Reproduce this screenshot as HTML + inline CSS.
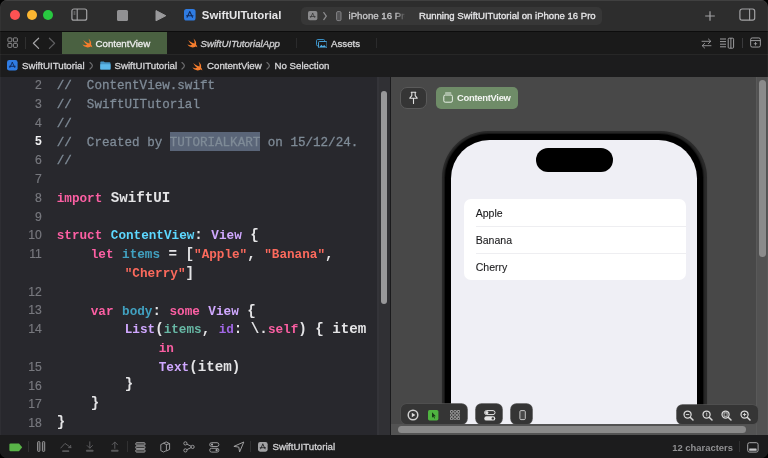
<!DOCTYPE html>
<html>
<head>
<meta charset="utf-8">
<style>
*{box-sizing:border-box;margin:0;padding:0}
html,body{width:768px;height:458px;overflow:hidden;background:#000}
#win{position:absolute;left:0;top:0;width:768px;height:458px;border-radius:7px;overflow:hidden;background:#1c1c1d}
body{position:relative;will-change:transform;font-family:"Liberation Sans",sans-serif;color:#dcdcdc;font-size:11px}
.abs{position:absolute}
#titlebar{left:0;top:0;width:768px;height:32px;background:#2d2d2d;border-bottom:1px solid #0d0d0d;box-shadow:inset 0 1px 0 #3b3b3b}
#tabbar{left:0;top:32px;width:768px;height:23px;background:#1a1a1a;border-bottom:1px solid #272727}
#crumbs{left:0;top:55px;width:768px;height:22px;background:#1c1c1d}
#editor{left:0;top:77px;width:391px;height:358px;background:#28282d}
#canvas{left:391px;top:77px;width:365px;height:358px;background:#484848;z-index:1}
#vscroll{left:756px;top:77px;width:12px;height:358px;background:#525252;border-left:1px solid #595959}
#status{left:0;top:435px;width:768px;height:23px;background:#1c1c1d;z-index:2}
.tl{position:absolute;top:10.2px;width:10px;height:10px;border-radius:50%}
.t{position:absolute;white-space:nowrap;line-height:1;-webkit-text-stroke:0.3px currentColor}
.t[style*="bold"]{-webkit-text-stroke:0}
.code{position:absolute;left:56.7px;font-family:"Liberation Mono",monospace;font-size:14.18px;line-height:18.78px;height:18.78px;white-space:pre;color:#e4e4e6;font-weight:bold}
.code span{font-size:12.67px}
.code span.c,.code span.sel{font-size:12.57px}
.cur{color:#f0f0f2 !important;font-weight:bold;-webkit-text-stroke:0 !important}
.sel{background:#5a6578;padding:4px 0 1.1px 0}
.ln{position:absolute;left:0;width:41.9px;text-align:right;font-family:"Liberation Sans",sans-serif;font-size:13.7px;line-height:18.78px;color:#77787e;transform:scaleX(0.89);transform-origin:100% 50%;-webkit-text-stroke:0.2px #77787e}
.c{color:#7f8b97;font-weight:normal;-webkit-text-stroke:0.28px #7f8b97}
.k{color:#fc5fa3}
.ty{color:#5dd8ff}
.ty2{color:#d0a8ff}
.s{color:#fc6a5d}
.v{color:#67b7a4}
.d{color:#41a1c0}
.p{color:#a167e6}
.tb{background:#353535;border-radius:5.5px;box-shadow:0 0 0 0.8px #515151}
.chev{font-size:10.5px;color:#7c7c7e}
</style>
</head>
<body>
<div id="win">
<div id="titlebar" class="abs">
  <div class="tl" style="left:10.2px;background:#fc5253"></div>
  <div class="tl" style="left:26.7px;background:#fcb631"></div>
  <div class="tl" style="left:43.2px;background:#28c840"></div>
  <!-- sidebar toggle -->
  <svg class="abs" style="left:71px;top:8.2px" width="17" height="14" viewBox="0 0 17 14"><rect x="0.9" y="1" width="14.8" height="11.2" rx="2" fill="none" stroke="#a2a2a4" stroke-width="1.2"/><line x1="6.2" y1="1" x2="6.2" y2="12.2" stroke="#a2a2a4" stroke-width="1.1"/><line x1="2.6" y1="4" x2="4.4" y2="4" stroke="#a2a2a4" stroke-width="0.8"/><line x1="2.6" y1="6" x2="4.4" y2="6" stroke="#a2a2a4" stroke-width="0.8"/></svg>
  <!-- stop -->
  <div class="abs" style="left:117.4px;top:10.4px;width:10.2px;height:10.2px;border-radius:1.5px;background:#919193"></div>
  <!-- play -->
  <svg class="abs" style="left:154px;top:8px" width="14" height="16" viewBox="0 0 14 16"><path d="M2 2.6 L11.8 7.7 L2 12.8 Z" fill="#9a9a9c" stroke="#9a9a9c" stroke-width="1" stroke-linejoin="round"/></svg>
  <!-- app icon -->
  <svg class="abs" style="left:184.2px;top:9.4px" width="12" height="12" viewBox="0 0 14 14"><rect x="0" y="0" width="13.5" height="13.5" rx="3" fill="#2f7ce3"/><path d="M6.75 3 L3.6 9.6 M6.75 3 L9.9 9.6 M3 8 L10.5 8" stroke="#10295a" stroke-width="1.2" fill="none" stroke-linecap="round"/></svg>
  <div class="t" style="left:201.8px;top:10.2px;font-size:11.4px;font-weight:bold;color:#e6e6e8">SwiftUITutorial</div>
  <!-- scheme pill -->
  <div class="abs" style="left:301px;top:7px;width:301px;height:18px;border-radius:5px;background:#373737"></div>
  <svg class="abs" style="left:308px;top:11.2px" width="9.8" height="9.8" viewBox="0 0 11 11"><rect x="0" y="0" width="10.5" height="10.5" rx="2" fill="#8a8a8c"/><path d="M5.25 2.6 L3 7.3 M5.25 2.6 L7.5 7.3 M2.5 6.2 L8 6.2" stroke="#373737" stroke-width="0.9" fill="none" stroke-linecap="round"/></svg>
  <svg class="abs" style="left:323.4px;top:12.2px" width="5" height="9" viewBox="0 0 5 9"><path d="M0.8 0.6 L3.3 4.1 L0.8 7.6" fill="none" stroke="#8c8c8e" stroke-width="1.25" stroke-linecap="round" stroke-linejoin="round"/></svg>
  <svg class="abs" style="left:336px;top:11px" width="6" height="11" viewBox="0 0 6 11"><rect x="0.6" y="0.6" width="4.4" height="9" rx="1.2" fill="#525254" stroke="#8a8a8c" stroke-width="0.9"/></svg>
  <div class="t" style="left:348.5px;top:11px;font-size:9.7px;color:#c8c8ca;width:56px;overflow:hidden;-webkit-mask-image:linear-gradient(90deg,#000 82%,transparent 102%);mask-image:linear-gradient(90deg,#000 82%,transparent 102%)">iPhone 16 Pro</div>
  <div class="t" style="left:419px;top:11.2px;font-size:9.57px;color:#e6e6e8">Running SwiftUITutorial on iPhone 16 Pro</div>
  <!-- plus -->
  <svg class="abs" style="left:704px;top:10px" width="12" height="12" viewBox="0 0 12 12"><path d="M6 1.2 V10.8 M1.2 6 H10.8" stroke="#a2a2a4" stroke-width="1.2"/></svg>
  <!-- right panel icon -->
  <svg class="abs" style="left:739px;top:8.2px" width="17" height="14" viewBox="0 0 17 14"><rect x="0.9" y="1" width="14.8" height="11.2" rx="2.2" fill="none" stroke="#a2a2a4" stroke-width="1.2"/><line x1="10.6" y1="1" x2="10.6" y2="12.2" stroke="#a2a2a4" stroke-width="1.1"/></svg>
</div>

<div id="tabbar" class="abs">
  <!-- grid icon -->
  <svg class="abs" style="left:6.8px;top:5.2px" width="11.6" height="11.6" viewBox="0 0 13 13"><g fill="none" stroke="#98989a" stroke-width="1"><rect x="1" y="1" width="4.4" height="4.4" rx="0.8"/><rect x="7.2" y="1" width="4.4" height="4.4" rx="0.8"/><rect x="1" y="7.2" width="4.4" height="4.4" rx="0.8"/><rect x="7.2" y="7.2" width="4.4" height="4.4" rx="0.8"/></g></svg>
  <div class="abs" style="left:25px;top:5px;width:1px;height:12px;background:#303030"></div>
  <svg class="abs" style="left:32px;top:5px" width="8" height="13" viewBox="0 0 8 13"><path d="M6.6 1.2 L1.4 6.3 L6.6 11.4" fill="none" stroke="#a4a4a6" stroke-width="1.2" stroke-linecap="round" stroke-linejoin="round"/></svg>
  <svg class="abs" style="left:48px;top:5px" width="8" height="13" viewBox="0 0 8 13"><path d="M1.4 1.2 L6.6 6.3 L1.4 11.4" fill="none" stroke="#5e5e60" stroke-width="1.2" stroke-linecap="round" stroke-linejoin="round"/></svg>
  <!-- active tab -->
  <div class="abs" style="left:62px;top:0;width:105px;height:22px;background:#4a6141"></div>
  <svg class="abs swift" style="left:81.6px;top:6.4px" width="11" height="10" viewBox="0 0 11 10"><use href="#swift"/></svg>
  <div class="t" style="left:95.5px;top:6.5px;font-size:9.7px;color:#ececec">ContentView</div>
  <svg class="abs swift" style="left:186.6px;top:6.4px" width="11" height="10" viewBox="0 0 11 10"><use href="#swift"/></svg>
  <div class="t" style="left:200.5px;top:6.5px;font-size:9.7px;color:#d0d0d2;font-style:italic">SwiftUITutorialApp</div>
  <div class="abs" style="left:296px;top:6px;width:1px;height:10px;background:#2b2b2c"></div>
  <!-- assets icon -->
  <svg class="abs" style="left:315.5px;top:6.6px" width="11.6" height="9.8" viewBox="0 0 13 11"><rect x="0.6" y="0.6" width="9" height="7" rx="1.2" fill="none" stroke="#3f9fdc" stroke-width="1"/><rect x="2.8" y="2.8" width="9.6" height="7.4" rx="1.2" fill="#1a1a1a" stroke="#4fb0ea" stroke-width="1"/><path d="M3.6 9.2 L6 6.4 L7.6 8 L9.2 6.6 L11.6 9.2Z" fill="#4fb0ea"/></svg>
  <div class="t" style="left:331px;top:6.5px;font-size:9.7px;color:#d8d8da">Assets</div>
  <div class="abs" style="left:376px;top:6px;width:1px;height:10px;background:#2b2b2c"></div>
  <!-- right icons -->
  <svg class="abs" style="left:700.8px;top:6px" width="11" height="11" viewBox="0 0 11 11"><path d="M1 3.3 H9.6 M7.4 1 L9.8 3.3 L7.4 5.6 M10 7.7 H1.4 M3.6 5.4 L1.2 7.7 L3.6 10" fill="none" stroke="#9c9c9e" stroke-width="0.9" stroke-linecap="round" stroke-linejoin="round"/></svg>
  <svg class="abs" style="left:719px;top:5px" width="16" height="13" viewBox="0 0 16 13"><path d="M1 2 H7 M1 4.6 H7 M1 7.2 H7 M1 9.8 H7" stroke="#9c9c9e" stroke-width="1"/><rect x="9.2" y="1.2" width="5.4" height="10" rx="1" fill="none" stroke="#9c9c9e" stroke-width="1"/><line x1="11.9" y1="1.2" x2="11.9" y2="11.2" stroke="#9c9c9e" stroke-width="1"/></svg>
  <div class="abs" style="left:742px;top:6px;width:1px;height:10px;background:#3a3a3c"></div>
  <svg class="abs" style="left:749.6px;top:5.2px" width="11.4" height="11.4" viewBox="0 0 12 12"><rect x="0.7" y="1" width="10.2" height="9.6" rx="1.6" fill="none" stroke="#a2a2a4" stroke-width="1"/><line x1="0.7" y1="3.8" x2="10.9" y2="3.8" stroke="#a2a2a4" stroke-width="1"/><path d="M5.8 5.3 V8.9 M4 7.1 H7.6" stroke="#a2a2a4" stroke-width="0.9"/></svg>
</div>

<div id="crumbs" class="abs">
  <svg class="abs" style="left:7px;top:5.2px" width="11" height="11" viewBox="0 0 14 14"><rect x="0" y="0" width="13.5" height="13.5" rx="3" fill="#2f7ce3"/><path d="M6.75 3 L3.6 9.6 M6.75 3 L9.9 9.6 M3 8 L10.5 8" stroke="#10295a" stroke-width="1.2" fill="none" stroke-linecap="round"/></svg>
  <div class="t" style="left:22px;top:6px;font-size:9.7px;color:#d6d6d8">SwiftUITutorial</div>
  <svg class="abs" style="left:89.1px;top:7.2px" width="5" height="9" viewBox="0 0 5 9"><path d="M1 0.6 Q3.4 2.4 3.4 3.8 Q3.4 5.2 1 7" fill="none" stroke="#6c6c6e" stroke-width="1.25" stroke-linecap="round" stroke-linejoin="round"/></svg>
  <svg class="abs" style="left:99.6px;top:6px" width="11" height="9" viewBox="0 0 11 9"><path d="M0.3 1.3 Q0.3 0.4 1.2 0.4 H3.8 L4.8 1.3 H9.6 Q10.5 1.3 10.5 2.2 V7.7 Q10.5 8.6 9.6 8.6 H1.2 Q0.3 8.6 0.3 7.7Z" fill="#4794c4"/><path d="M0.3 3.2 H10.5 V7.7 Q10.5 8.6 9.6 8.6 H1.2 Q0.3 8.6 0.3 7.7Z" fill="#5db8ea"/></svg>
  <div class="t" style="left:114.5px;top:6px;font-size:9.7px;color:#d6d6d8">SwiftUITutorial</div>
  <svg class="abs" style="left:181.4px;top:7.2px" width="5" height="9" viewBox="0 0 5 9"><path d="M1 0.6 Q3.4 2.4 3.4 3.8 Q3.4 5.2 1 7" fill="none" stroke="#6c6c6e" stroke-width="1.25" stroke-linecap="round" stroke-linejoin="round"/></svg>
  <svg class="abs swift" style="left:192px;top:5.5px" width="11" height="10" viewBox="0 0 11 10"><use href="#swift"/></svg>
  <div class="t" style="left:207px;top:6px;font-size:9.7px;color:#d6d6d8">ContentView</div>
  <svg class="abs" style="left:266.1px;top:7.2px" width="5" height="9" viewBox="0 0 5 9"><path d="M1 0.6 Q3.4 2.4 3.4 3.8 Q3.4 5.2 1 7" fill="none" stroke="#6c6c6e" stroke-width="1.25" stroke-linecap="round" stroke-linejoin="round"/></svg>
  <div class="t" style="left:274.5px;top:6px;font-size:9.7px;color:#d6d6d8">No Selection</div>
</div>

<div id="editor" class="abs">
<div class="ln" style="top:-0.90px">2</div>
<div class="code" style="top:-0.80px"><span class="c">//  ContentView.swift</span></div>
<div class="ln" style="top:17.88px">3</div>
<div class="code" style="top:17.98px"><span class="c">//  SwiftUITutorial</span></div>
<div class="ln" style="top:36.66px">4</div>
<div class="code" style="top:36.76px"><span class="c">//</span></div>
<div class="ln cur" style="top:55.44px">5</div>
<div class="code" style="top:55.54px"><span class="c">//  Created by <span class="sel">TUTORIALKART</span> on 15/12/24.</span></div>
<div class="ln" style="top:74.22px">6</div>
<div class="code" style="top:74.32px"><span class="c">//</span></div>
<div class="ln" style="top:93.00px">7</div>
<div class="ln" style="top:111.78px">8</div>
<div class="code" style="top:111.88px"><span class="k">import</span> SwiftUI</div>
<div class="ln" style="top:130.56px">9</div>
<div class="ln" style="top:149.34px">10</div>
<div class="code" style="top:149.44px"><span class="k">struct</span> <span class="ty">ContentView</span>: <span class="ty2">View</span> {</div>
<div class="ln" style="top:168.12px">11</div>
<div class="code" style="top:168.22px">    <span class="k">let</span> <span class="d">items</span> = [<span class="s">"Apple"</span>, <span class="s">"Banana"</span>,</div>
<div class="code" style="top:187.00px">        <span class="s">"Cherry"</span>]</div>
<div class="ln" style="top:205.68px">12</div>
<div class="ln" style="top:224.46px">13</div>
<div class="code" style="top:224.56px">    <span class="k">var</span> <span class="d">body</span>: <span class="k">some</span> <span class="ty2">View</span> {</div>
<div class="ln" style="top:243.24px">14</div>
<div class="code" style="top:243.34px">        <span class="ty2">List</span>(<span class="v">items</span>, <span class="p">id</span>: \.<span class="k">self</span>) { item</div>
<div class="code" style="top:262.12px">            <span class="k">in</span></div>
<div class="ln" style="top:280.80px">15</div>
<div class="code" style="top:280.90px">            <span class="ty2">Text</span>(item)</div>
<div class="ln" style="top:299.58px">16</div>
<div class="code" style="top:298.48px">        }</div>
<div class="ln" style="top:318.36px">17</div>
<div class="code" style="top:317.26px">    }</div>
<div class="ln" style="top:337.14px">18</div>
<div class="code" style="top:336.04px">}</div>
<div class="abs" style="left:377px;top:0;width:13px;height:358px;background:#303034;border-left:2px solid #343439"></div>
<div class="abs" style="left:389.5px;top:0;width:1.5px;height:358px;background:#1b1b1d"></div>
<div class="abs" style="left:380.8px;top:14px;width:6.4px;height:213px;border-radius:3.2px;background:#98989a"></div>
</div>
<div id="canvas" class="abs">
  <!-- pin -->
  <div class="abs" style="left:9.4px;top:10.4px;width:26.2px;height:21.2px;border-radius:7px;background:#353535;border:1px solid #5a5a5a"></div>
  <svg class="abs" style="left:17px;top:14px" width="11" height="14" viewBox="0 0 11 14"><path d="M3.2 1.2 H7.8 M3.8 1.4 L3.8 4.6 L1.8 7.2 H9.2 L7.2 4.6 L7.2 1.4 M5.5 7.4 V12.4" fill="none" stroke="#e0e0e0" stroke-width="1.1" stroke-linecap="round" stroke-linejoin="round"/></svg>
  <!-- chip -->
  <div class="abs" style="left:44.5px;top:10px;width:82.5px;height:22px;border-radius:5px;background:#6f8c68"></div>
  <svg class="abs" style="left:51.5px;top:15.2px" width="11" height="12" viewBox="0 0 11 12"><path d="M2.6 1 H7.8" stroke="#e8efe6" stroke-width="1.2" stroke-linecap="round"/><rect x="0.8" y="3" width="8.6" height="7.2" rx="1.4" fill="none" stroke="#e8efe6" stroke-width="1"/></svg>
  <div class="t" style="left:66px;top:16.2px;font-size:9.4px;letter-spacing:-0.27px;font-weight:bold;color:#f4f6f3">ContentView</div>
  <!-- phone -->
  <div class="abs" style="left:50.9px;top:53.6px;width:264.9px;height:340px;border-radius:47px 47px 0 0;background:#2b2b2b;box-shadow:0 0 1px 0 #3a3a3a"></div>
  <div class="abs" style="left:54.2px;top:56.8px;width:257.8px;height:340px;border-radius:44px 44px 0 0;background:#000;box-shadow:0 0 1.6px 0.8px #121212"></div>
  <div class="abs" style="left:60px;top:63.2px;width:245.8px;height:340px;border-radius:38.5px 38.5px 0 0;background:#efeff5"></div>
  <div class="abs" style="left:144.6px;top:71px;width:77.4px;height:23.5px;border-radius:12px;background:#000"></div>
  <!-- list -->
  <div class="abs" style="left:72.5px;top:122.2px;width:222.1px;height:80.6px;border-radius:7px;background:#fff"></div>
  <div class="abs" style="left:84.7px;top:148.7px;width:209.9px;height:1px;background:#eeeef1"></div>
  <div class="abs" style="left:84.7px;top:175.7px;width:209.9px;height:1px;background:#eeeef1"></div>
  <div class="t" style="left:84.7px;top:131px;font-size:10.55px;color:#1c1c1e;-webkit-text-stroke:0.1px">Apple</div>
  <div class="t" style="left:84.7px;top:158px;font-size:10.55px;color:#1c1c1e;-webkit-text-stroke:0.1px">Banana</div>
  <div class="t" style="left:84.7px;top:185px;font-size:10.55px;color:#1c1c1e;-webkit-text-stroke:0.1px">Cherry</div>
  <!-- hscroll -->
  <div class="abs" style="left:0;top:346.8px;width:365px;height:11.2px;background:#535353"></div>
  <div class="abs" style="left:7px;top:349px;width:348px;height:7px;border-radius:3.5px;background:#8a8a8a"></div>
  <!-- bottom toolbars -->
  <div class="abs tb" style="left:10px;top:327.3px;width:66px;height:20px"></div>
  <div class="abs tb" style="left:85px;top:327.3px;width:26px;height:20px"></div>
  <div class="abs tb" style="left:120px;top:327.3px;width:21.2px;height:20px"></div>
  <div class="abs tb" style="left:286px;top:327.7px;width:80.8px;height:19.6px"></div>
  <!-- play circle -->
  <svg class="abs" style="left:16px;top:332px" width="12" height="12" viewBox="0 0 12 12"><circle cx="6" cy="6" r="4.8" fill="none" stroke="#d0d0d0" stroke-width="1.5"/><path d="M4.8 3.8 L8.4 6 L4.8 8.2Z" fill="#dcdcdc"/></svg>
  <!-- green cursor -->
  <svg class="abs" style="left:37px;top:333px" width="11" height="11" viewBox="0 0 11 11"><rect x="0" y="0" width="10.4" height="10.4" rx="1.6" fill="#4fb440"/><path d="M4 2.2 L4 7.8 L5.3 6.6 L6.2 8.6 L7 8.2 L6.1 6.3 L7.8 6.2Z" fill="#173a16"/></svg>
  <!-- grid -->
  <svg class="abs" style="left:58.6px;top:333px" width="10.2" height="10.2" viewBox="0 0 11 11"><g fill="none" stroke="#b4b4b4" stroke-width="0.9"><rect x="0.5" y="0.5" width="2.6" height="2.6" rx="0.6"/><rect x="4.2" y="0.5" width="2.6" height="2.6" rx="0.6"/><rect x="7.9" y="0.5" width="2.6" height="2.6" rx="0.6"/><rect x="0.5" y="4.2" width="2.6" height="2.6" rx="0.6"/><rect x="4.2" y="4.2" width="2.6" height="2.6" rx="0.6"/><rect x="7.9" y="4.2" width="2.6" height="2.6" rx="0.6"/><rect x="0.5" y="7.9" width="2.6" height="2.6" rx="0.6"/><rect x="4.2" y="7.9" width="2.6" height="2.6" rx="0.6"/><rect x="7.9" y="7.9" width="2.6" height="2.6" rx="0.6"/></g></svg>
  <!-- toggles -->
  <svg class="abs" style="left:92.5px;top:332.5px" width="12" height="11" viewBox="0 0 12 11"><rect x="0.6" y="0.6" width="10.4" height="4" rx="2" fill="none" stroke="#e6e6e6" stroke-width="1"/><circle cx="2.8" cy="2.6" r="1.6" fill="#e6e6e6"/><rect x="0.3" y="6.2" width="11" height="4.4" rx="2.2" fill="#e6e6e6"/><circle cx="8.8" cy="8.4" r="1.2" fill="#363636"/></svg>
  <!-- device -->
  <svg class="abs" style="left:127.6px;top:332.6px" width="8" height="11" viewBox="0 0 8 11"><rect x="0.9" y="0.6" width="5.4" height="9" rx="1.1" fill="#484848" stroke="#c4c4c4" stroke-width="1"/></svg>
  <!-- zoom icons -->
  <svg class="abs" style="left:292.2px;top:332.9px" width="11" height="11" viewBox="0 0 13 13"><circle cx="5.4" cy="5.4" r="4.2" fill="none" stroke="#d8d8d8" stroke-width="1.5"/><path d="M8.8 8.8 L11.8 11.8" stroke="#d8d8d8" stroke-width="1.8" stroke-linecap="round"/><path d="M3.4 5.4 H7.4" stroke="#dcdcdc" stroke-width="1.1"/></svg>
  <svg class="abs" style="left:310.9px;top:332.9px" width="11" height="11" viewBox="0 0 13 13"><circle cx="5.4" cy="5.4" r="4.2" fill="none" stroke="#d8d8d8" stroke-width="1.5"/><path d="M8.8 8.8 L11.8 11.8" stroke="#d8d8d8" stroke-width="1.8" stroke-linecap="round"/><path d="M4.6 4.2 L5.6 3.4 V7.4" fill="none" stroke="#dcdcdc" stroke-width="0.9"/></svg>
  <svg class="abs" style="left:329.7px;top:332.9px" width="11" height="11" viewBox="0 0 13 13"><circle cx="5.4" cy="5.4" r="4.2" fill="none" stroke="#d8d8d8" stroke-width="1.5"/><path d="M8.8 8.8 L11.8 11.8" stroke="#d8d8d8" stroke-width="1.8" stroke-linecap="round"/><rect x="3.6" y="3.4" width="3.6" height="4" fill="none" stroke="#dcdcdc" stroke-width="0.9"/></svg>
  <svg class="abs" style="left:348.6px;top:332.9px" width="11" height="11" viewBox="0 0 13 13"><circle cx="5.4" cy="5.4" r="4.2" fill="none" stroke="#d8d8d8" stroke-width="1.5"/><path d="M8.8 8.8 L11.8 11.8" stroke="#d8d8d8" stroke-width="1.8" stroke-linecap="round"/><path d="M3.4 5.4 H7.4 M5.4 3.4 V7.4" stroke="#dcdcdc" stroke-width="1.1"/></svg>
</div>
<div id="vscroll" class="abs"><div class="abs" style="left:2px;top:3px;width:7px;height:177px;border-radius:3.5px;background:#8b8b8b"></div></div>
<div id="status" class="abs">
  <svg class="abs" style="left:9px;top:8px" width="14" height="9" viewBox="0 0 14 9"><path d="M1.6 0.4 H10 L13.2 4.3 L10 8.2 H1.6 Q0.4 8.2 0.4 7 V1.6 Q0.4 0.4 1.6 0.4Z" fill="#59b448"/></svg>
  <div class="abs" style="left:28px;top:6px;width:1px;height:11px;background:#313132"></div>
  <svg class="abs" style="left:37px;top:6.4px" width="9" height="12" viewBox="0 0 9 12"><rect x="0.6" y="0.6" width="2.3" height="9.8" rx="0.9" fill="#3a3a3a" stroke="#a4a4a6" stroke-width="0.9"/><rect x="5.4" y="0.6" width="2.3" height="9.8" rx="0.9" fill="#3a3a3a" stroke="#a4a4a6" stroke-width="0.9"/></svg>
  <svg class="abs" style="left:60px;top:7px" width="12" height="11" viewBox="0 0 12 11"><path d="M0.8 6 L5 1.4 L10.8 5.6 M10.8 5.6 L8.6 5.6 M10.8 5.6 L10.6 3.4" fill="none" stroke="#5c5c5e" stroke-width="1" stroke-linecap="round" stroke-linejoin="round"/><rect x="2.2" y="8.2" width="7" height="1.9" rx="0.5" fill="#58585a"/></svg>
  <svg class="abs" style="left:85px;top:6px" width="10" height="12" viewBox="0 0 10 12"><path d="M4.8 0.8 V7 M2.2 4.6 L4.8 7.2 L7.4 4.6" fill="none" stroke="#5c5c5e" stroke-width="1" stroke-linecap="round" stroke-linejoin="round"/><rect x="1.2" y="8.8" width="7.2" height="1.9" rx="0.5" fill="#58585a"/></svg>
  <svg class="abs" style="left:110px;top:6px" width="10" height="12" viewBox="0 0 10 12"><path d="M4.8 7.4 V1.2 M2.2 3.6 L4.8 1 L7.4 3.6" fill="none" stroke="#5c5c5e" stroke-width="1" stroke-linecap="round" stroke-linejoin="round"/><rect x="1.2" y="8.8" width="7.2" height="1.9" rx="0.5" fill="#58585a"/></svg>
  <div class="abs" style="left:126.5px;top:6px;width:1px;height:11px;background:#313132"></div>
  <svg class="abs" style="left:134.6px;top:6.6px" width="11" height="11" viewBox="0 0 12 12"><g fill="#3a3a3a" stroke="#a6a6a8" stroke-width="1"><rect x="0.9" y="0.8" width="10" height="2.6" rx="0.7"/><rect x="0.9" y="4.6" width="10" height="2.6" rx="0.7"/><rect x="0.9" y="8.4" width="10" height="2.6" rx="0.7"/></g></svg>
  <svg class="abs" style="left:159.5px;top:6px" width="11" height="12" viewBox="0 0 11 12"><g fill="none" stroke="#a6a6a8" stroke-width="0.9" stroke-linejoin="round"><path d="M0.8 3.6 L3.6 2.2 L6.4 3.6 V9.6 L3.6 11 L0.8 9.6Z"/><path d="M3.2 2.4 L6.2 0.9 L9.6 2.6 V8.4 L6.4 10"/><path d="M6.4 3.6 L9.6 2.6"/></g></svg>
  <svg class="abs" style="left:183px;top:6px" width="12" height="12" viewBox="0 0 12 12"><g fill="none" stroke="#a6a6a8" stroke-width="0.9"><circle cx="2.4" cy="2.4" r="1.6"/><circle cx="2.4" cy="9.4" r="1.6"/><circle cx="9.6" cy="5.9" r="1.6"/><path d="M3.8 3.1 L8.2 5.3 M3.8 8.7 L8.2 6.5"/></g></svg>
  <svg class="abs" style="left:208.5px;top:6.5px" width="11" height="11" viewBox="0 0 11 11"><g fill="none" stroke="#a6a6a8" stroke-width="0.9"><rect x="0.7" y="0.7" width="9.2" height="3.8" rx="1.9"/><rect x="0.7" y="6.3" width="9.2" height="3.8" rx="1.9"/></g><circle cx="3" cy="2.6" r="1.1" fill="#a6a6a8"/><circle cx="7.6" cy="8.2" r="1.1" fill="#a6a6a8"/></svg>
  <svg class="abs" style="left:232.5px;top:6px" width="12" height="12" viewBox="0 0 12 12"><path d="M10.8 1 L0.9 5.4 L5.8 6.1 L6.6 11 Z" fill="none" stroke="#a6a6a8" stroke-width="0.95" stroke-linejoin="round"/></svg>
  <div class="abs" style="left:250px;top:6px;width:1px;height:11px;background:#313132"></div>
  <svg class="abs" style="left:258px;top:7px" width="10" height="10" viewBox="0 0 14 14"><rect x="0" y="0" width="13.5" height="13.5" rx="3" fill="#a2a2a4"/><path d="M6.75 3 L3.6 9.6 M6.75 3 L9.9 9.6 M3 8 L10.5 8" stroke="#1d1d1e" stroke-width="1.2" fill="none" stroke-linecap="round"/></svg>
  <div class="t" style="left:272.5px;top:7px;font-size:9.7px;color:#d2d2d4">SwiftUITutorial</div>
  <div class="t" style="left:672.3px;top:7.8px;font-size:9.42px;font-weight:bold;color:#909092">12 characters</div>
  <div class="abs" style="left:739px;top:6px;width:1px;height:11px;background:#313132"></div>
  <svg class="abs" style="left:747px;top:6.5px" width="12" height="11" viewBox="0 0 12 11"><rect x="0.7" y="0.7" width="10.4" height="9.4" rx="1.8" fill="none" stroke="#a6a6a8" stroke-width="1"/><rect x="2.2" y="6.6" width="7.4" height="2.2" rx="0.4" fill="#c8c8ca"/></svg>
</div>
<div class="abs" style="left:0;top:0;width:768px;height:458px;border-radius:7px;box-shadow:inset 0 0 0 0.6px rgba(255,255,255,0.06);pointer-events:none"></div>
</div>
<svg width="0" height="0" style="position:absolute"><defs>
<g id="swift"><path d="M6.4 0.6 C8.8 2.4 9.6 4.8 9 6.6 C9.8 7.6 10.4 8.6 10.2 9.5 C9.6 8.7 8.8 8.4 8.2 8.7 C6.6 9.8 4.2 9.6 2.6 8.6 C1.6 8 0.8 7.1 0.4 6.2 C2 7.2 3.8 7.4 5.2 6.8 C3.6 5.6 2.2 3.8 1.3 1.9 C3.2 3.5 5.4 4.9 7.4 5.4 C7.8 4 7.4 2.2 6.4 0.6Z" fill="#f57d2d"/></g>
</defs></svg>
</body>
</html>
